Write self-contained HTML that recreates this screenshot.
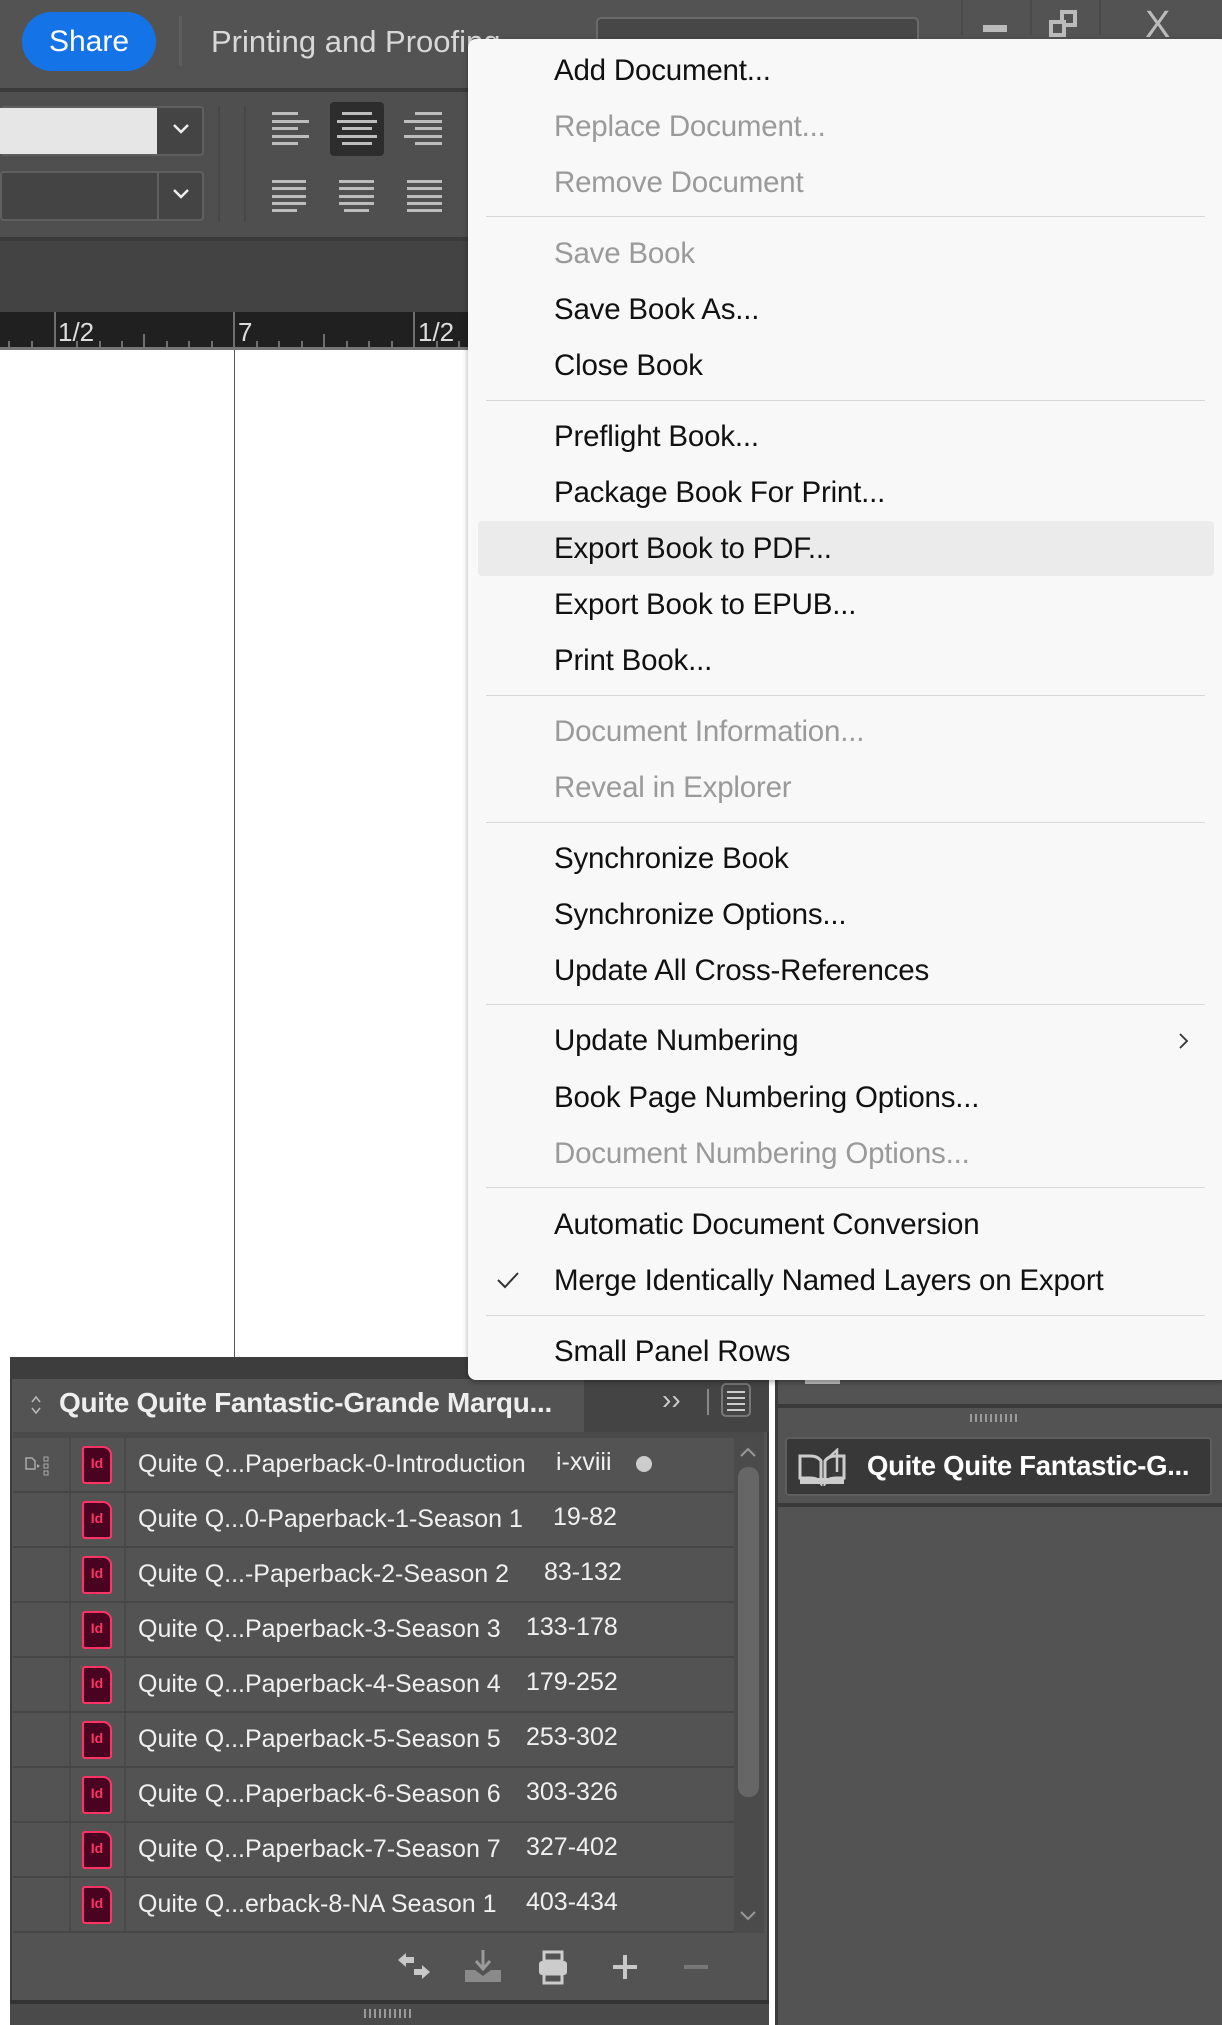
<!DOCTYPE html>
<html><head><meta charset="utf-8"><style>
*{margin:0;padding:0;box-sizing:border-box}
body{width:1222px;height:2025px;overflow:hidden;background:#535353;font-family:"Liberation Sans",sans-serif;position:relative}
.a{position:absolute}
.mi{position:absolute;left:554px;font-size:29.5px;color:#111;line-height:34px;white-space:nowrap;letter-spacing:-0.2px}
.dis{color:#9a9a9a}
.sep{position:absolute;left:486px;width:719px;height:1px;background:#d8d8d8}
.row{position:absolute;left:13px;width:721px;height:55px;background:#535353;border-bottom:2px solid #464646}
.row .c1{position:absolute;left:0;top:0;width:58px;height:53px;border-right:2px solid #4a4a4a}
.row .c2{position:absolute;left:58px;top:0;width:55px;height:53px;border-right:2px solid #4a4a4a}
.row .t{position:absolute;left:125px;top:12px;font-size:25px;color:#f0f0f0;white-space:nowrap}
.row .p{position:absolute;top:10px;font-size:25px;color:#f0f0f0}
.id{position:absolute;left:11px;top:8px;width:30px;height:38px;background:#49021f;border:2px solid #ff3366;border-radius:3px 9px 3px 3px;color:#ff3366;font-size:14px;font-weight:bold;text-align:center;line-height:30px}
.al{position:absolute;height:3px;background:#bdbdbd}
</style></head><body>
<!-- top bar -->
<div class="a" style="left:0;top:0;width:1222px;height:88px;background:#535353"></div>
<div class="a" style="left:22px;top:12px;width:134px;height:59px;border-radius:30px;background:#1473e6;color:#fff;font-size:30px;line-height:59px;text-align:center">Share</div>
<div class="a" style="left:179px;top:16px;width:3px;height:50px;background:#5e5e5e"></div>
<div class="a" style="left:211px;top:24px;font-size:31px;color:#d8d8d8">Printing and Proofing</div>
<div class="a" style="left:596px;top:17px;width:323px;height:40px;border:2px solid #6a6a6a;border-radius:5px;background:#474747"></div>
<div class="a" style="left:961px;top:0;width:2px;height:35px;background:#4a4a4a"></div>
<div class="a" style="left:1030px;top:0;width:2px;height:35px;background:#4a4a4a"></div>
<div class="a" style="left:1099px;top:0;width:2px;height:35px;background:#4a4a4a"></div>
<div class="a" style="left:983px;top:25px;width:24px;height:7px;background:#bbb"></div>
<div class="a" style="left:1049px;top:10px;width:31px;height:27px;"><div class="a" style="left:11px;top:0;width:17px;height:17px;border:4px solid #bbb"></div><div class="a" style="left:0;top:10px;width:17px;height:17px;border:4px solid #bbb;background:#535353"></div></div>
<div class="a" style="left:1145px;top:4px;font-size:38px;color:#bbb">X</div>
<!-- control panel -->
<div class="a" style="left:0;top:88px;width:1222px;height:4px;background:#3a3a3a"></div>
<div class="a" style="left:0;top:92px;width:1222px;height:145px;background:#4f4f4f"></div>
<div class="a" style="left:0;top:106px;width:204px;height:50px;border:2px solid #5f5f5f;border-radius:4px;background:#444"></div>
<div class="a" style="left:0;top:108px;width:157px;height:46px;background:#e6e6e6"></div>
<div class="a" style="left:0;top:171px;width:204px;height:50px;border:2px solid #5f5f5f;border-radius:4px;background:#444"></div>
<div class="a" style="left:157px;top:171px;width:2px;height:50px;background:#5f5f5f"></div>
<svg class="a" style="left:171px;top:122px" width="20" height="14"><path d="M3 3l7 7 7-7" stroke="#eee" stroke-width="2.5" fill="none"/></svg>
<svg class="a" style="left:171px;top:187px" width="20" height="14"><path d="M3 3l7 7 7-7" stroke="#eee" stroke-width="2.5" fill="none"/></svg>
<div class="a" style="left:218px;top:106px;width:2px;height:116px;background:#474747"></div>
<div class="a" style="left:244px;top:106px;width:2px;height:116px;background:#474747"></div>
<div class="a" style="left:330px;top:102px;width:54px;height:54px;border-radius:4px;background:#2d2d2d"></div>
<div class="al" style="left:272px;top:112px;width:26px"></div><div class="al" style="left:272px;top:120px;width:37px"></div><div class="al" style="left:272px;top:127px;width:26px"></div><div class="al" style="left:272px;top:135px;width:37px"></div><div class="al" style="left:272px;top:142px;width:26px"></div>
<div class="al" style="left:342px;top:112px;width:30px"></div><div class="al" style="left:337px;top:120px;width:40px"></div><div class="al" style="left:342px;top:127px;width:30px"></div><div class="al" style="left:337px;top:135px;width:40px"></div><div class="al" style="left:342px;top:142px;width:30px"></div>
<div class="al" style="left:415px;top:112px;width:27px"></div><div class="al" style="left:404px;top:120px;width:38px"></div><div class="al" style="left:415px;top:127px;width:27px"></div><div class="al" style="left:404px;top:135px;width:38px"></div><div class="al" style="left:415px;top:142px;width:27px"></div>
<div class="al" style="left:272px;top:180px;width:34px"></div><div class="al" style="left:272px;top:187px;width:34px"></div><div class="al" style="left:272px;top:195px;width:34px"></div><div class="al" style="left:272px;top:202px;width:34px"></div><div class="al" style="left:272px;top:209px;width:25px"></div>
<div class="al" style="left:339px;top:180px;width:35px"></div><div class="al" style="left:339px;top:187px;width:35px"></div><div class="al" style="left:339px;top:195px;width:35px"></div><div class="al" style="left:339px;top:202px;width:35px"></div><div class="al" style="left:344px;top:209px;width:25px"></div>
<div class="al" style="left:407px;top:180px;width:35px"></div><div class="al" style="left:407px;top:187px;width:35px"></div><div class="al" style="left:407px;top:195px;width:35px"></div><div class="al" style="left:407px;top:202px;width:35px"></div><div class="al" style="left:407px;top:209px;width:35px"></div>
<div class="a" style="left:0;top:237px;width:1222px;height:4px;background:#3a3a3a"></div>
<div class="a" style="left:0;top:241px;width:1222px;height:71px;background:#434343"></div>
<!-- ruler -->
<div class="a" style="left:0;top:312px;width:1222px;height:38px;background:#202020"></div>
<div class="a" style="left:0;top:347px;width:1222px;height:3px;background:#777"></div>
<svg class="a" style="left:0;top:312px" width="600" height="38">
<g stroke="#bbb" stroke-width="1">
<path d="M55 0v35M234 0v35M414 0v35"/>
<path d="M9 29v6M32 29v6M77 29v6M100 29v6M122 29v6M167 29v6M189 29v6M212 29v6M257 29v6M279 29v6M302 29v6M347 29v6M369 29v6M392 29v6M437 29v6M459 29v6"/>
<path d="M144 22v13M324 22v13"/>
</g>
<g fill="#ddd" font-family="Liberation Sans" font-size="26"><text x="58" y="29">1/2</text><text x="238" y="29">7</text><text x="418" y="29">1/2</text></g>
</svg>
<!-- canvas -->
<div class="a" style="left:0;top:350px;width:775px;height:1675px;background:#fff"></div>
<div class="a" style="left:234px;top:350px;width:1px;height:1010px;background:#555"></div>
<!-- right panel -->
<div class="a" style="left:775px;top:1360px;width:447px;height:665px;background:#535353;border-left:3px solid #3c3c3c"></div>
<div class="a" style="left:805px;top:1362px;width:35px;height:22px;background:#bdbdbd"></div>
<div class="a" style="left:775px;top:1404px;width:447px;height:4px;background:#3a3a3a"></div>
<div class="a" style="left:970px;top:1414px;width:50px;height:8px;background:repeating-linear-gradient(90deg,#9a9a9a 0 2px,transparent 2px 5px)"></div>
<div class="a" style="left:785px;top:1437px;width:427px;height:59px;background:#383838;border:2px solid #5e5e5e;border-radius:4px"></div>
<svg class="a" style="left:797px;top:1448px" width="50" height="38"><path d="M3 8h10q8 0 11 5v22q-3-5-11-5H3z M47 8h-8q-8 0-11 5v22q3-5 11-5h8z" stroke="#ccc" stroke-width="3" fill="none"/><path d="M28 13l12-11v22" stroke="#ccc" stroke-width="2.5" fill="none"/><rect x="3" y="30" width="44" height="6" fill="#ccc"/></svg>
<div class="a" style="left:867px;top:1450px;font-size:27.5px;font-weight:bold;color:#fff;letter-spacing:-0.3px">Quite Quite Fantastic-G...</div>
<div class="a" style="left:775px;top:1503px;width:447px;height:4px;background:#3a3a3a"></div>
<!-- book panel -->
<div class="a" style="left:10px;top:1357px;width:759px;height:650px;background:#535353;border:2px solid #3c3c3c"></div>
<div class="a" style="left:10px;top:1357px;width:759px;height:22px;background:#3d3d3d"></div>
<div class="a" style="left:584px;top:1379px;width:185px;height:53px;background:#444"></div>
<svg class="a" style="left:30px;top:1394px" width="12" height="22"><path d="M2 8l4-5 4 5M2 14l4 5 4-5" stroke="#bbb" stroke-width="1.5" fill="none"/></svg>
<div class="a" style="left:59px;top:1387px;font-size:28px;font-weight:bold;color:#eee;letter-spacing:-0.3px">Quite Quite Fantastic-Grande Marqu...</div>
<div class="a" style="left:662px;top:1384px;font-size:28px;color:#ccc">››</div>
<div class="a" style="left:707px;top:1389px;width:2px;height:26px;background:#888"></div>
<div class="a" style="left:721px;top:1383px;width:30px;height:34px;border:2px solid #777;border-radius:5px"></div>
<div class="al" style="left:727px;top:1391px;width:18px;height:2px;background:#ccc"></div><div class="al" style="left:727px;top:1397px;width:18px;height:2px;background:#ccc"></div><div class="al" style="left:727px;top:1403px;width:18px;height:2px;background:#ccc"></div><div class="al" style="left:727px;top:1409px;width:18px;height:2px;background:#ccc"></div>
<div class="a" style="left:13px;top:1432px;width:751px;height:6px;background:#4a4a4a"></div>

<div class="row" style="top:1438px"><div class="c1"><svg class="a" style="left:12px;top:18px" width="30" height="20"><path d="M1 2h6l3 3v8H1z" stroke="#aaa" stroke-width="1.5" fill="none"/><path d="M12 8l3 2-3 2z" fill="#aaa"/><rect x="19" y="1" width="4" height="4" stroke="#aaa" fill="none"/><rect x="19" y="8" width="4" height="4" stroke="#aaa" fill="none"/><rect x="19" y="15" width="4" height="4" stroke="#aaa" fill="none"/></svg></div><div class="c2"><div class="id">Id</div></div><div class="t">Quite Q...Paperback-0-Introduction</div><div class="p" style="left:543px">i-xviii</div><div class="a" style="left:623px;top:18px;width:16px;height:16px;border-radius:50%;background:#ccc"></div></div>
<div class="row" style="top:1493px"><div class="c1"></div><div class="c2"><div class="id">Id</div></div><div class="t">Quite Q...0-Paperback-1-Season 1</div><div class="p" style="left:540px">19-82</div></div>
<div class="row" style="top:1548px"><div class="c1"></div><div class="c2"><div class="id">Id</div></div><div class="t">Quite Q...-Paperback-2-Season 2</div><div class="p" style="left:531px">83-132</div></div>
<div class="row" style="top:1603px"><div class="c1"></div><div class="c2"><div class="id">Id</div></div><div class="t">Quite Q...Paperback-3-Season 3</div><div class="p" style="left:513px">133-178</div></div>
<div class="row" style="top:1658px"><div class="c1"></div><div class="c2"><div class="id">Id</div></div><div class="t">Quite Q...Paperback-4-Season 4</div><div class="p" style="left:513px">179-252</div></div>
<div class="row" style="top:1713px"><div class="c1"></div><div class="c2"><div class="id">Id</div></div><div class="t">Quite Q...Paperback-5-Season 5</div><div class="p" style="left:513px">253-302</div></div>
<div class="row" style="top:1768px"><div class="c1"></div><div class="c2"><div class="id">Id</div></div><div class="t">Quite Q...Paperback-6-Season 6</div><div class="p" style="left:513px">303-326</div></div>
<div class="row" style="top:1823px"><div class="c1"></div><div class="c2"><div class="id">Id</div></div><div class="t">Quite Q...Paperback-7-Season 7</div><div class="p" style="left:513px">327-402</div></div>
<div class="row" style="top:1878px"><div class="c1"></div><div class="c2"><div class="id">Id</div></div><div class="t">Quite Q...erback-8-NA Season 1</div><div class="p" style="left:513px">403-434</div></div>
<!-- scrollbar -->
<div class="a" style="left:734px;top:1438px;width:30px;height:495px;background:#4b4b4b"></div>
<div class="a" style="left:738px;top:1467px;width:21px;height:330px;border-radius:10px;background:#666"></div>
<svg class="a" style="left:738px;top:1446px" width="20" height="12"><path d="M3 10l7-7 7 7" stroke="#999" stroke-width="2" fill="none"/></svg>
<svg class="a" style="left:738px;top:1910px" width="20" height="12"><path d="M3 2l7 7 7-7" stroke="#999" stroke-width="2" fill="none"/></svg>
<!-- footer icons -->
<svg class="a" style="left:396px;top:1950px" width="36" height="34"><path d="M2 10l8-7v4h8v6h-8v4z M34 22l-8-7v4h-8v6h8v4z" fill="#c8c8c8"/></svg>
<svg class="a" style="left:463px;top:1950px" width="40" height="34"><path d="M20 0v18M13 11l7 8 7-8" stroke="#9a9a9a" stroke-width="3" fill="none"/><path d="M2 20h10l8 6 8-6h10v12H2z" fill="#8a8a8a"/></svg>
<svg class="a" style="left:537px;top:1950px" width="32" height="36"><rect x="7" y="2" width="18" height="9" fill="none" stroke="#ccc" stroke-width="3"/><rect x="2" y="11" width="28" height="14" rx="3" fill="#ccc"/><rect x="7" y="24" width="18" height="9" fill="none" stroke="#ccc" stroke-width="3"/></svg>
<svg class="a" style="left:611px;top:1953px" width="28" height="28"><path d="M14 2v24M2 14h24" stroke="#c8c8c8" stroke-width="4"/></svg>
<svg class="a" style="left:682px;top:1953px" width="28" height="28"><path d="M2 14h24" stroke="#777" stroke-width="4"/></svg>
<div class="a" style="left:10px;top:2000px;width:759px;height:4px;background:#333"></div>
<div class="a" style="left:10px;top:2004px;width:759px;height:21px;background:#4a4a4a"></div>
<div class="a" style="left:364px;top:2009px;width:50px;height:9px;background:repeating-linear-gradient(90deg,#9a9a9a 0 2px,transparent 2px 5px)"></div>
<!-- menu -->
<div class="a" style="left:468px;top:39px;width:760px;height:1341px;background:#f8f8f8;border-radius:8px;box-shadow:0 2px 6px rgba(0,0,0,.35)"></div>
<div class="a" style="left:478px;top:521px;width:736px;height:55px;border-radius:4px;background:#ebebeb"></div>
<div class="mi" style="top:54px">Add Document...</div>
<div class="mi dis" style="top:110px">Replace Document...</div>
<div class="mi dis" style="top:166px">Remove Document</div>
<div class="sep" style="top:216px"></div>
<div class="mi dis" style="top:237px">Save Book</div>
<div class="mi" style="top:293px">Save Book As...</div>
<div class="mi" style="top:349px">Close Book</div>
<div class="sep" style="top:400px"></div>
<div class="mi" style="top:420px">Preflight Book...</div>
<div class="mi" style="top:476px">Package Book For Print...</div>
<div class="mi" style="top:532px">Export Book to PDF...</div>
<div class="mi" style="top:588px">Export Book to EPUB...</div>
<div class="mi" style="top:644px">Print Book...</div>
<div class="sep" style="top:695px"></div>
<div class="mi dis" style="top:715px">Document Information...</div>
<div class="mi dis" style="top:771px">Reveal in Explorer</div>
<div class="sep" style="top:822px"></div>
<div class="mi" style="top:842px">Synchronize Book</div>
<div class="mi" style="top:898px">Synchronize Options...</div>
<div class="mi" style="top:954px">Update All Cross-References</div>
<div class="sep" style="top:1004px"></div>
<div class="mi" style="top:1024px">Update Numbering</div>
<svg class="a" style="left:1177px;top:1031px" width="14" height="20"><path d="M3 3l7 7-7 7" stroke="#333" stroke-width="1.8" fill="none"/></svg>
<div class="mi" style="top:1081px">Book Page Numbering Options...</div>
<div class="mi dis" style="top:1137px">Document Numbering Options...</div>
<div class="sep" style="top:1187px"></div>
<div class="mi" style="top:1208px">Automatic Document Conversion</div>
<svg class="a" style="left:496px;top:1270px" width="24" height="20"><path d="M2 10l7 7L22 3" stroke="#333" stroke-width="2" fill="none"/></svg>
<div class="mi" style="top:1264px">Merge Identically Named Layers on Export</div>
<div class="sep" style="top:1315px"></div>
<div class="mi" style="top:1335px">Small Panel Rows</div>
</body></html>
